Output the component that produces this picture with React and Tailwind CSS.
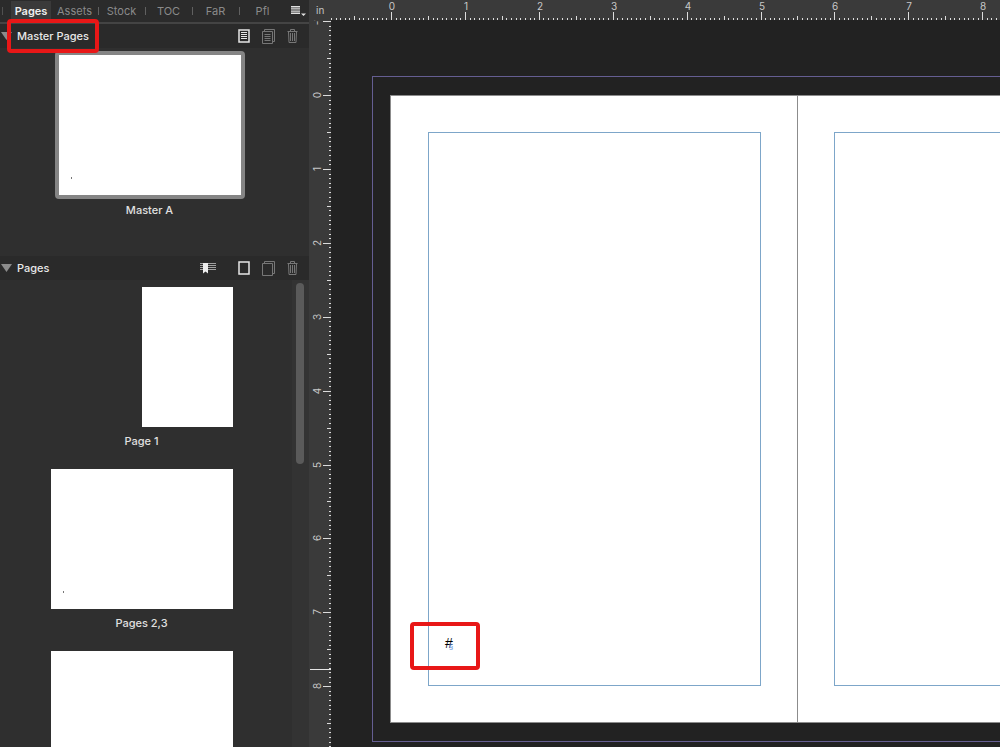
import { useState } from "react";
import clsx from "clsx";

const TABS = ["Pages", "Assets", "Stock", "TOC", "FaR", "Pfl"];

const PAGES = [
  { label: "Page 1", single: true },
  { label: "Pages 2,3", mark: true },
  { label: "Pages 4,5" },
];

// ruler scale
const INCH = 73.9;
const STEPS = 16;

function buildTicks(origin, to) {
  const ticks = [];
  for (let i = -STEPS; i <= to * STEPS; i++) {
    const pos = Math.round(origin + (i * INCH) / STEPS);
    if (pos < 0) continue;
    const major = i % STEPS === 0;
    const half = i % (STEPS / 2) === 0;
    ticks.push({
      pos,
      size: major ? 8 : half ? 4 : 2,
      label: major ? String(i / STEPS) : null,
    });
  }
  return ticks;
}

function HorizontalRuler() {
  return (
    <svg className="h-5 min-w-0 flex-1" aria-hidden="true">
      {buildTicks(60, 20).map((t) => (
        <g key={t.pos}>
          <rect x={t.pos} y={20 - t.size} width="1" height={t.size} fill="#dcdcdc" />
          {t.label && (
            <text x={t.pos + 1} y="10" textAnchor="middle" fontSize="10" fill="#c8c8c8">
              {t.label}
            </text>
          )}
        </g>
      ))}
    </svg>
  );
}

function VerticalRuler() {
  return (
    <svg className="h-full w-[22px] shrink-0 bg-[#3a3a3a]" aria-hidden="true">
      {buildTicks(75, 12).map((t) => (
        <g key={t.pos}>
          <rect x={22 - t.size} y={t.pos} width={t.size} height="1" fill="#dcdcdc" />
          {t.label && (
            <text
              transform={`translate(12 ${t.pos}) rotate(-90)`}
              textAnchor="middle"
              fontSize="10"
              fill="#c8c8c8"
            >
              {t.label}
            </text>
          )}
        </g>
      ))}
      <rect x="1" y="649" width="21" height="1" fill="#e4e4e4" />
    </svg>
  );
}

function MenuIcon() {
  return (
    <svg width="15" height="12" viewBox="0 0 15 12" fill="#e0e0e0">
      <path d="M0 1h9v1.400H0zM0 3.200h9v1.400H0zM0 5.400h9v1.400H0zM0 7.600h9V9H0zM10 8.500h5L12.500 11z" />
    </svg>
  );
}

function MasterIcon() {
  return (
    <svg width="12" height="14" viewBox="0 0 12 14" fill="none" stroke="#e6e6e6">
      <path d="M1 1h10v12H1z" strokeWidth="1.500" />
      <path d="M3 3.500h6M3 5.500h6M3 7.500h6M3 9.500h6" />
    </svg>
  );
}

function PageIcon() {
  return (
    <svg width="12" height="14" viewBox="0 0 12 14" fill="none" stroke="#e6e6e6">
      <path d="M1 1h10v12H1z" strokeWidth="1.500" />
    </svg>
  );
}

function CopyIcon({ lines }) {
  return (
    <svg width="13" height="15" viewBox="0 0 13 15" fill="none" stroke="#777777">
      <path d="M.5 2.500h10v12H.5zM2.500 2.500v-2h10v12h-2" />
      {lines && <path d="M2.500 5.500h6M2.500 7.500h6M2.500 9.500h6M2.500 11.500h6" />}
    </svg>
  );
}

function TrashIcon() {
  return (
    <svg width="11" height="14" viewBox="0 0 11 14" fill="none" stroke="#777777">
      <path d="M.5 2.500h10M3.500 2V.5h4V2M1.500 3l.5 10.500h7L9.500 3M3.500 4v8M5.500 4v8M7.500 4v8" />
    </svg>
  );
}

function SectionIcon() {
  return (
    <svg width="16" height="12" viewBox="0 0 16 12">
      <path
        d="M0 1.500h3M0 3.500h3M0 5.500h3M0 7.500h3M8 1.500h8M8 3.500h8M8 5.500h8M8 7.500h8"
        stroke="#a0a0a0"
      />
      <path d="M3 1h5v10.500L5.500 9.500 3 11.500z" fill="#eeeeee" />
    </svg>
  );
}

function SectionHeader({ title, open, onToggle, children }) {
  return (
    <div className="flex h-6 shrink-0 items-center bg-[#2a2a2a] pl-px pr-[11px]">
      <button
        type="button"
        aria-expanded={open}
        onClick={onToggle}
        className="flex items-center gap-[5px] text-[11px] leading-4 font-medium text-[#e8e8e8]"
      >
        <svg width="11" height="8" viewBox="0 0 11 8" className={clsx(!open && "-rotate-90")}>
          <path d="M0 0h11L5.500 8z" fill="#8c8c8c" />
        </svg>
        {title}
      </button>
      <div className="ml-auto flex items-center gap-3">{children}</div>
    </div>
  );
}

function IconButton({ label, children }) {
  return (
    <button type="button" aria-label={label} title={label}>
      {children}
    </button>
  );
}

function Thumbnail({ single, mark }) {
  return (
    <div
      className={clsx(
        "flex h-[140px] items-end bg-white pb-4 pl-3",
        single ? "ml-auto w-[91px]" : "w-[182px]"
      )}
    >
      {mark && <span className="h-[2px] w-px bg-[#777777]" />}
    </div>
  );
}

function Sidebar() {
  const [tab, setTab] = useState("Pages");
  const [mastersOpen, setMastersOpen] = useState(true);
  const [pagesOpen, setPagesOpen] = useState(true);

  return (
    <aside className="relative flex w-[309px] shrink-0 flex-col bg-[#2f2f2f]">
      <div className="flex h-[22px] shrink-0 items-center bg-[#2b2b2b] pl-[2px]">
        <span className="mr-2 h-2 w-px bg-[#505050]" />
        {TABS.map((name, i) => (
          <button
            key={name}
            type="button"
            onClick={() => setTab(name)}
            className={clsx(
              "flex h-5 items-center justify-center text-[11px] leading-4",
              i === 0 ? "w-10" : "w-[47px]",
              tab === name ? "bg-[#3a3a3a] font-semibold text-[#eeeeee]" : "text-[#8a8a8a]",
              i > 1 && "relative before:absolute before:left-0 before:h-2 before:w-px before:bg-[#606060]"
            )}
          >
            {name}
          </button>
        ))}
        <span className="ml-auto flex pr-[3px]">
          <IconButton label="Panel menu">
            <MenuIcon />
          </IconButton>
        </span>
      </div>
      <div className="h-[2px] shrink-0 bg-[#444444]" />

      <SectionHeader
        title="Master Pages"
        open={mastersOpen}
        onToggle={() => setMastersOpen(!mastersOpen)}
      >
        <IconButton label="Add master">
          <MasterIcon />
        </IconButton>
        <IconButton label="Duplicate master">
          <CopyIcon lines />
        </IconButton>
        <IconButton label="Delete master">
          <TrashIcon />
        </IconButton>
      </SectionHeader>
      {mastersOpen && (
        <div className="flex h-52 shrink-0 flex-col items-center pt-[3px] pr-[10px]">
          <figure className="text-center">
            <div className="rounded-sm bg-[#858585] p-1">
              <Thumbnail mark />
            </div>
            <figcaption className="mt-[3px] text-[11px] leading-4 font-medium text-[#e0e0e0]">
              Master A
            </figcaption>
          </figure>
        </div>
      )}

      <SectionHeader title="Pages" open={pagesOpen} onToggle={() => setPagesOpen(!pagesOpen)}>
        <span className="mr-[10px] flex">
          <IconButton label="Section manager">
            <SectionIcon />
          </IconButton>
        </span>
        <IconButton label="Add page">
          <PageIcon />
        </IconButton>
        <IconButton label="Duplicate page">
          <CopyIcon />
        </IconButton>
        <IconButton label="Delete page">
          <TrashIcon />
        </IconButton>
      </SectionHeader>
      {pagesOpen && (
        <div className="flex min-h-0 flex-1 overflow-hidden">
          <div className="flex flex-1 flex-col items-center gap-5 pt-[7px] pr-[9px]">
            {PAGES.map((page) => (
              <figure key={page.label} className="w-[182px] shrink-0 text-center">
                <Thumbnail single={page.single} mark={page.mark} />
                <figcaption className="mt-[6px] text-[11px] leading-4 font-medium text-[#e0e0e0]">
                  {page.label}
                </figcaption>
              </figure>
            ))}
          </div>
          <div className="w-[17px] bg-[#333333] pt-[3px] pl-1">
            <div className="h-[181px] w-2 rounded-full bg-[#5a5a5a]" />
          </div>
        </div>
      )}

      <div className="pointer-events-none absolute top-[19px] left-[7px] h-[34px] w-[92px] rounded-sm border-4 border-[#e81717]" />
    </aside>
  );
}

function DocumentPage({ children, first }) {
  return (
    <div
      className={clsx(
        "h-[626px] w-[407px] shrink-0 bg-white py-9 pr-9",
        first ? "border-r border-[#8c8c8c] pl-[37px]" : "pl-9"
      )}
    >
      <div className="flex h-full items-end border border-[#7da6c9] pb-8 pl-4">{children}</div>
    </div>
  );
}

function Canvas() {
  return (
    <main className="relative min-w-0 flex-1 overflow-hidden bg-[#222222] pt-14 pl-[41px]">
      <div className="w-[850px] border border-[#655e92] px-[17px] py-[18px]">
        <div className="flex w-[816px] border border-[#8c8c8c]">
          <DocumentPage first>
            <p className="flex items-end font-['Liberation_Sans',sans-serif] text-[14px] leading-5 text-black">
              #<span className="-ml-1 text-[8px] leading-3 text-[#6d9ae0]">§</span>
            </p>
          </DocumentPage>
          <DocumentPage />
        </div>
      </div>
      <div className="pointer-events-none absolute top-[602px] left-[79px] h-12 w-[70px] rounded-sm border-4 border-[#e81717]" />
    </main>
  );
}

export default function App() {
  return (
    <div className="flex h-screen overflow-hidden bg-[#222222] font-[Inter,sans-serif]">
      <Sidebar />
      <div className="flex min-w-0 flex-1 flex-col">
        <div className="flex h-5 shrink-0 bg-[#3a3a3a]">
          <span className="w-[22px] shrink-0 pl-[7px] text-[10px] leading-5 text-[#c4c4c4]">in</span>
          <HorizontalRuler />
        </div>
        <div className="flex min-h-0 flex-1">
          <VerticalRuler />
          <Canvas />
        </div>
      </div>
    </div>
  );
}
